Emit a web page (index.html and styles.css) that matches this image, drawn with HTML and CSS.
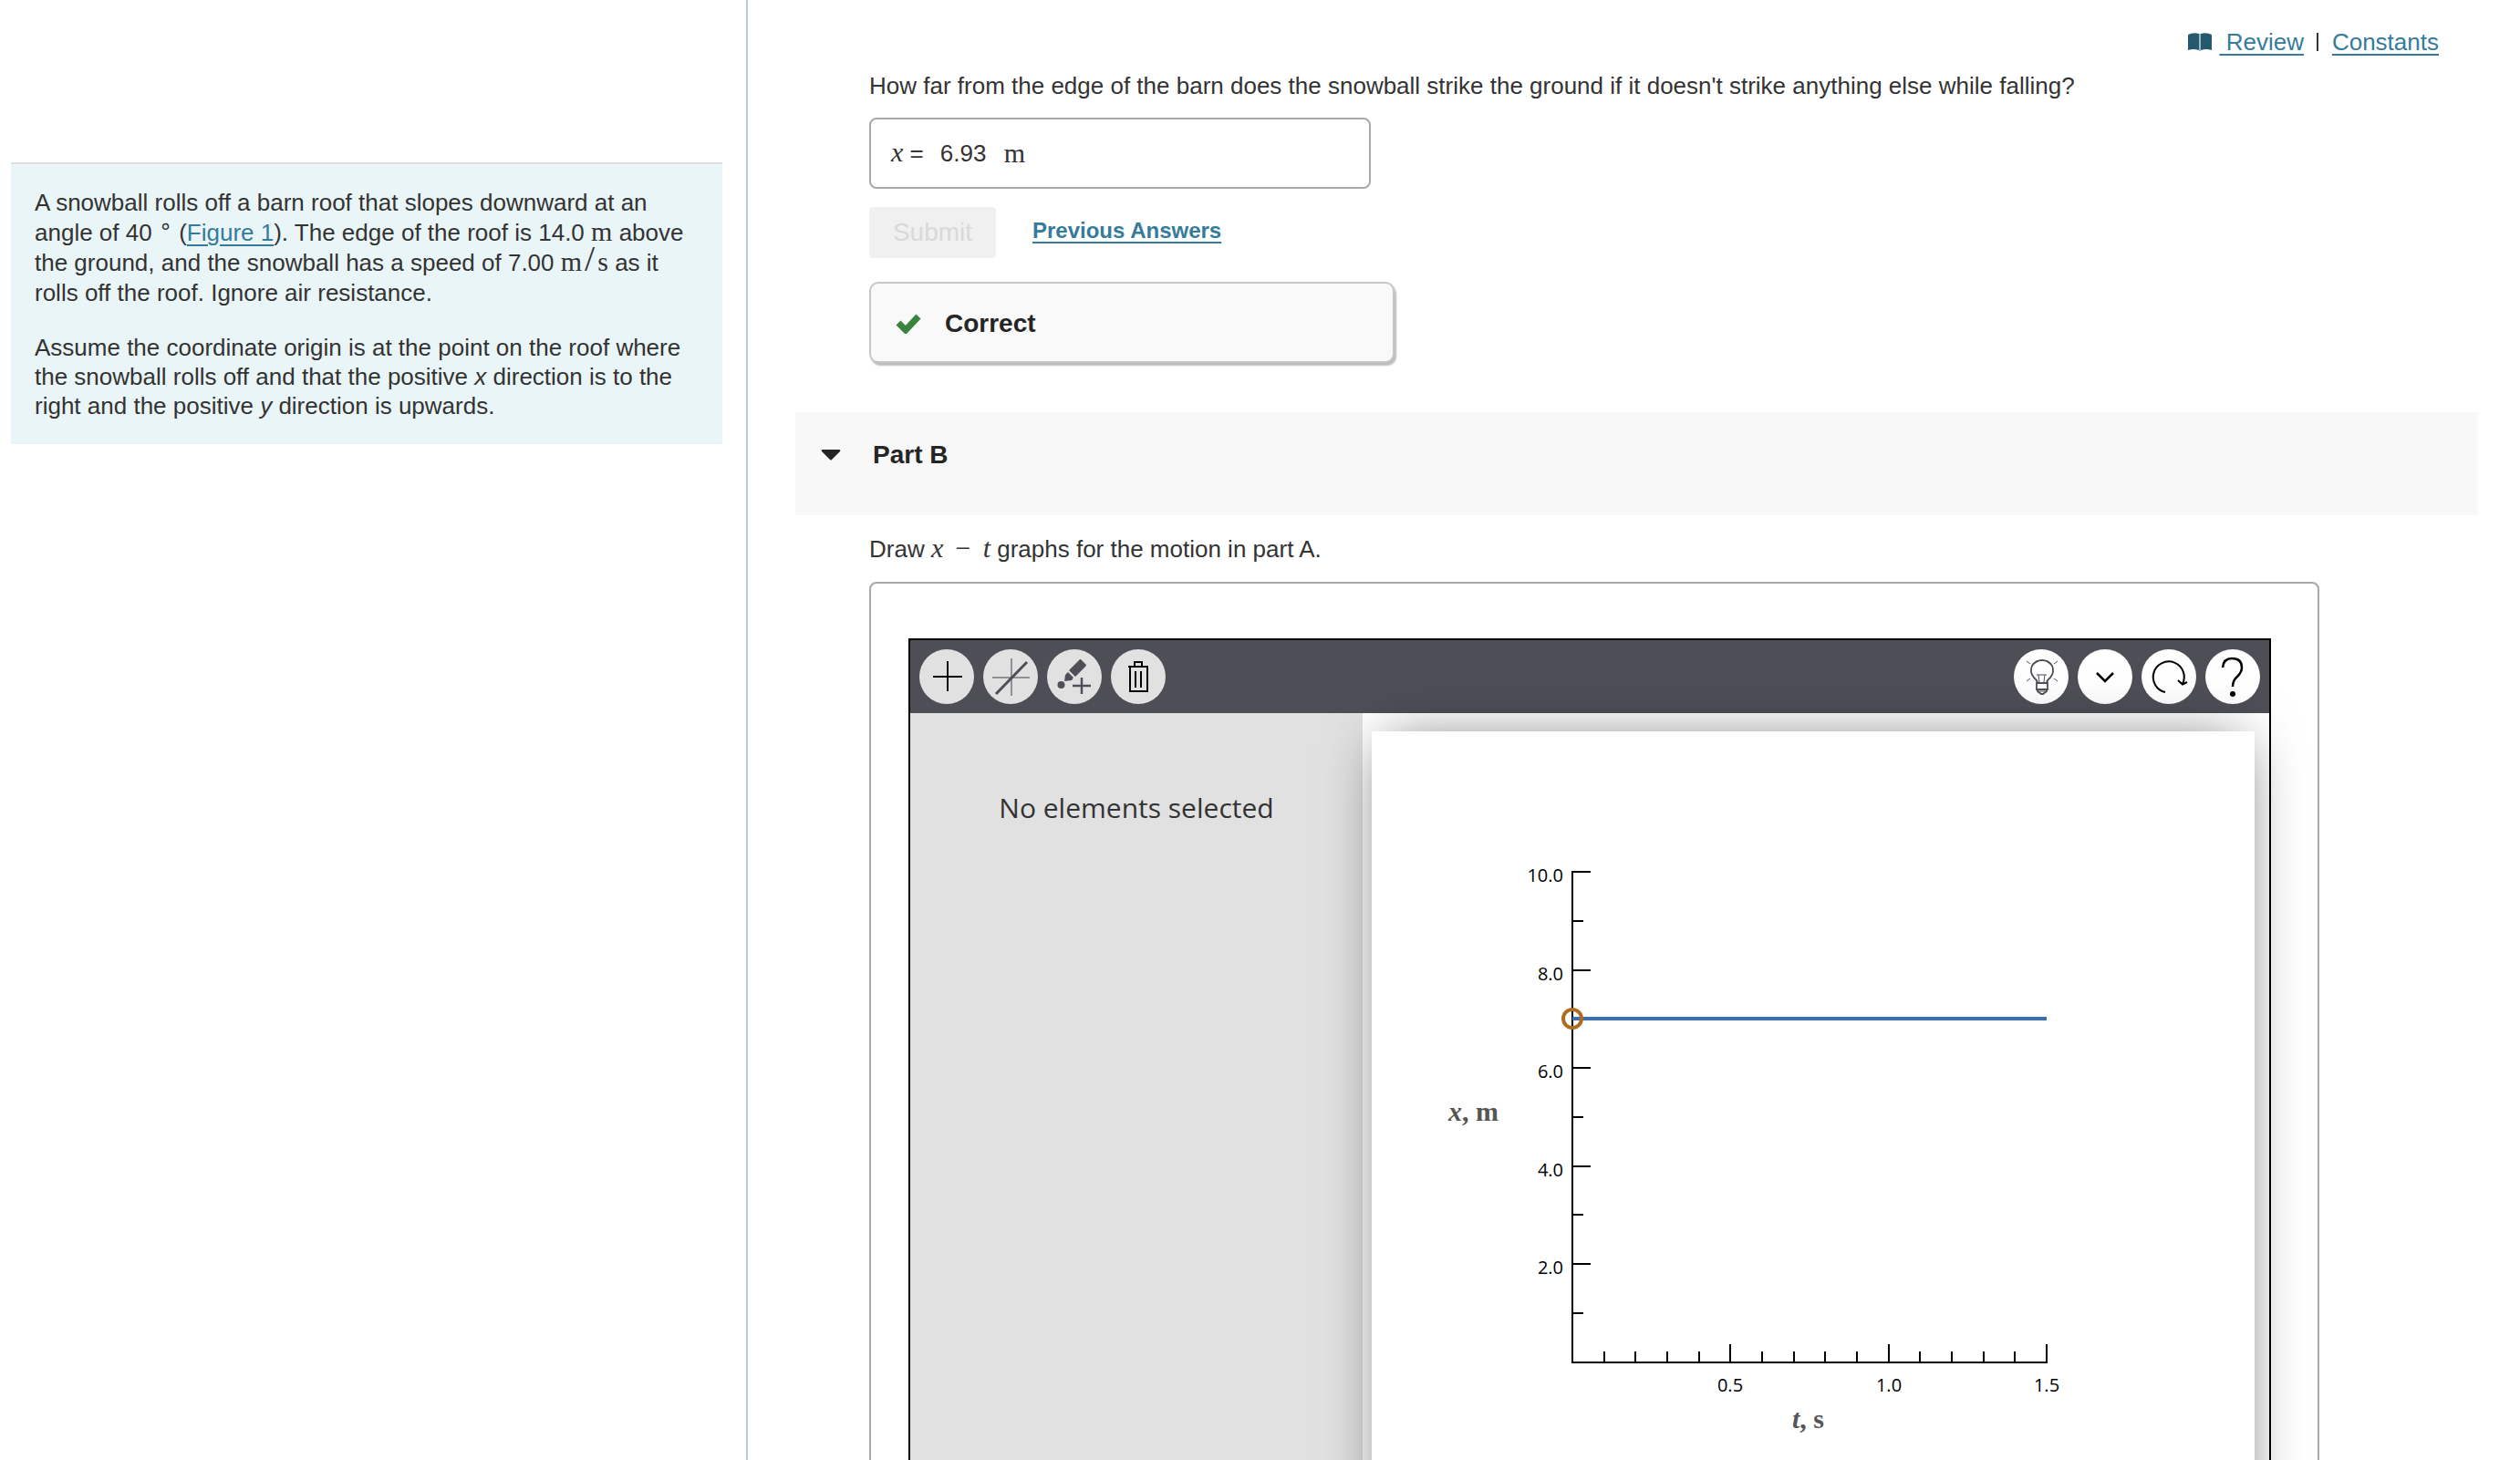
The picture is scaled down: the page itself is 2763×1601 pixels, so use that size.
FILE: index.html
```html
<!DOCTYPE html>
<html lang="en">
<head>
    <meta charset="UTF-8">
    <meta name="viewport" content="width=device-width, initial-scale=1.0">
    <title>Snowball problem</title>
    <link rel="stylesheet" href="styles.css">
</head>
<body>
    <div class="page">
        <aside class="intro-pane">
            <section class="intro">
                <p class="tall">A snowball rolls off a barn roof that slopes downward at an angle of 40 <span class="degree">∘</span> (<a href="#figure1">Figure 1</a>). The edge of the roof is 14.0 <span class="math">m</span> above the ground, and the snowball has a speed of 7.00 <span class="math">m<span class="slash">/</span>s</span> as it rolls off the roof. Ignore air resistance.</p>
                <p>Assume the coordinate origin is at the point on the roof where the snowball rolls off and that the positive <em>x</em> direction is to the right and the positive <em>y</em> direction is upwards.</p>
            </section>
        </aside>

        <main class="problem">
            <nav class="links">
                <svg class="book" viewBox="0 0 26 20" width="26" height="20" aria-hidden="true">
                    <path d="M0 2Q6-1 12 1V19Q6 17 0 19Z" fill="#24586e"/>
                    <path d="M14 1Q20-1 26 2V19Q20 17 14 19Z" fill="#24586e"/>
                    <path d="M12 1h2v19h-2z" fill="#9db7c2"/>
                </svg>
                <a href="#review">&nbsp;Review</a>
                <span class="divider"></span>
                <a href="#constants">Constants</a>
            </nav>

            <!-- Part A -->
            <div class="part">
                <p class="question">How far from the edge of the barn does the snowball strike the ground if it doesn't strike anything else while falling?</p>
                <div class="answer">
                    <label for="answerA"><i class="math">x</i> =</label>
                    <input id="answerA" type="text" value="6.93" readonly>
                    <span class="math">m</span>
                </div>
                <div class="actions">
                    <button type="button" class="submit" disabled>Submit</button>
                    <a href="#previous" class="previous">Previous Answers</a>
                </div>
                <div class="feedback">
                    <svg viewBox="0 0 28 22" width="28" height="22" aria-hidden="true">
                        <path d="M3 10L11 18L25 3" fill="none" stroke="#3a833f" stroke-width="7"/>
                    </svg>
                    <strong>Correct</strong>
                </div>
            </div>

            <!-- Part B -->
            <header class="part-header">
                <svg viewBox="0 0 22 12" width="22" height="12" aria-hidden="true">
                    <path d="M2 0H20Q22 0 21 2L12 11Q11 12 10 11L1 2Q0 0 2 0Z" fill="#252525"/>
                </svg>
                <h2>Part B</h2>
            </header>
            <div class="part">
                <p class="draw">Draw <i class="math">x</i> <span class="math minus">−</span> <i class="math">t</i> graphs for the motion in part A.</p>
                <div class="frame">
                    <div class="applet">
                        <div class="toolbar">
                            <button type="button" class="tool" aria-label="Add">
                                <svg viewBox="0 0 60 60"><path d="M31 13V46M15 30H47" stroke="#000" stroke-width="2"/></svg>
                            </button>
                            <button type="button" class="tool" aria-label="Line">
                                <svg viewBox="0 0 60 60" stroke="#4f4f57"><path d="M31 10V51M10 31H51" stroke="#77777d" stroke-width="1.500"/><path d="M14 49L48 14" stroke-width="3"/></svg>
                            </button>
                            <button type="button" class="tool" aria-label="Add point">
                                <svg viewBox="0 0 60 60" fill="#4f4f57"><path d="M37 11L43 17Q43 18 42 19L31 30L24 23L36 11ZM23 25L29 31L27 34L19 35L20 28Z"/><circle cx="15.500" cy="39" r="4"/><path d="M38 31V49M28 40H48" stroke="#4f4f57" stroke-width="2.500"/></svg>
                            </button>
                            <button type="button" class="tool" aria-label="Delete">
                                <svg viewBox="0 0 60 60" fill="none" stroke="#000" stroke-width="2"><path d="M19 19H41M21 19V46H40V19M26 19V14H34V19M27 24V42M33 24V42"/></svg>
                            </button>
                            <button type="button" class="tool light push" aria-label="Hint">
                                <svg viewBox="0 0 60 60" fill="none" stroke="#4f4f57" stroke-width="1.800"><path d="M26 37Q26 34 22 31Q17 25 20 18Q24 12 31 12Q38 12 42 18Q45 25 40 31Q36 34 36 37ZM25 37H37V44H25ZM26 44V46L30 49H32L36 46V44"/><path d="M25 28H36M27 28L28 36M34 28L33 36M26 46H36M14 13L18 16M48 13L44 16M14 35L18 32M48 35L44 32" stroke-width="1"/></svg>
                            </button>
                            <button type="button" class="tool light" aria-label="More">
                                <svg viewBox="0 0 60 60" fill="none" stroke="#000" stroke-width="2.500"><path d="M21 26L30 35L39 26"/></svg>
                            </button>
                            <button type="button" class="tool light" aria-label="Reset">
                                <svg viewBox="0 0 60 60" fill="none" stroke="#000" stroke-width="2"><path d="M26 47A17 17 0 1 1 45 38M40 34L45 38.500L50 36"/></svg>
                            </button>
                            <button type="button" class="tool light" aria-label="Help">
                                <svg viewBox="0 0 60 60" fill="none" stroke="#000" stroke-width="2.500"><path d="M19 20Q20 10 29 10Q40 10 40 20Q40 25 35 30Q30 34 30 41"/><circle cx="30" cy="49" r="3" fill="#000" stroke="none"/></svg>
                            </button>
                        </div>
                        <div class="workspace">
                            <div class="properties">No elements selected</div>
                            <div class="canvas">
                                <svg class="graph" viewBox="0 0 968 900" width="968" height="900" role="img" aria-label="x-t graph">
                                    <g class="ticks">
                                        <path d="M220 153V692M219 692H741"/>
                                        <path d="M220 154H240M220 208H232M220 262H240M220 315H232M220 369H240M220 423H232M220 477H240M220 530H232M220 584H240M220 638H232"/>
                                        <path d="M255 692V680M289 692V680M324 692V680M359 692V680M393 692V672M428 692V680M463 692V680M497 692V680M532 692V680M567 692V672M601 692V680M636 692V680M671 692V680M705 692V680M740 692V672"/>
                                    </g>
                                    <g class="labels y-labels">
                                        <text x="210" y="165">10.0</text>
                                        <text x="210" y="273">8.0</text>
                                        <text x="210" y="380">6.0</text>
                                        <text x="210" y="488">4.0</text>
                                        <text x="210" y="595">2.0</text>
                                    </g>
                                    <g class="labels x-labels">
                                        <text x="393" y="724">0.5</text>
                                        <text x="567" y="724">1.0</text>
                                        <text x="740" y="724">1.5</text>
                                    </g>
                                    <text class="axis-name" x="84" y="427"><tspan font-style="italic">x</tspan>, m</text>
                                    <text class="axis-name" x="461" y="764"><tspan font-style="italic">t</tspan>, s</text>
                                    <path d="M220 315H740" stroke="#3a6fb7" stroke-width="4"/>
                                    <circle cx="220" cy="315" r="10" fill="none" stroke="#b06b20" stroke-width="4"/>
                                </svg>
                            </div>
                        </div>
                    </div>
                </div>
            </div>
        </main>
    </div>
</body>
</html>
```

FILE: styles.css
```css
* {
    box-sizing: border-box;
}
body {
    margin: 0;
    background-color: #fff;
    color: #333;
    font-family: "Liberation Sans", Arial, sans-serif;
    font-size: 26px;
    line-height: 32px;
}
p, h2 {
    margin: 0;
}
a {
    color: #357b9c;
    text-decoration-thickness: 2px;
    text-underline-offset: 4px;
}
.page {
    display: grid;
    grid-template-columns: 820px 1fr;
    height: 100vh;
}

/* Left pane */
.intro-pane {
    padding: 178px 26px 0 12px;
    border-right: 2px solid #b8c9dc;
}
.intro {
    padding: 26px 24px 26px 26px;
    border-top: 2px solid #ddd;
    background-color: #eaf5f7;
}
.tall {
    margin-bottom: 27px;
    line-height: 33px;
}
.math {
    font-family: "Liberation Serif", "Times New Roman", serif;
    font-size: 30px;
    line-height: 0;
}
.slash {
    margin: 0 3px;
    font-size: 40px;
    line-height: 0;
}
.minus {
    margin: 0 6px;
}
.degree {
    font-family: "DejaVu Sans", sans-serif;
    font-size: 24px;
    line-height: 0;
    vertical-align: 8px;
}

/* Right pane */
.problem {
    overflow-x: hidden;
    overflow-y: auto;
    scrollbar-width: none;
    padding: 30px 46px 0 52px;
}
.links {
    display: flex;
    align-items: center;
    padding-right: 43px;
    justify-content: flex-end;
    height: 32px;
}
.book {
    margin-right: 8px;
}
.divider {
    width: 2px;
    height: 20px;
    margin: 0 15px 0 14px;
    background-color: #333;
}
.part {
    padding: 0 174px 0 81px;
}
.question {
    margin: 16px 0 19px;
}
.answer {
    display: flex;
    align-items: center;
    gap: 18px;
    width: 550px;
    height: 78px;
    padding: 0 22px;
    border: 2px solid #a9a9a9;
    border-radius: 8px;
}
.answer input {
    width: 52px;
    padding: 0;
    border: 0;
    color: #333;
    font: inherit;
}
.actions {
    display: flex;
    align-items: center;
    gap: 40px;
    margin: 20px 0 26px;
}
.submit {
    width: 139px;
    height: 56px;
    padding: 0;
    border: 0;
    border-radius: 4px;
    background-color: #f0f0f0;
    color: #d9d9d9;
    font: 28px "Liberation Sans", Arial, sans-serif;
}
.previous {
    margin-bottom: 4px;
    font-size: 24px;
    font-weight: bold;
}
.feedback {
    display: flex;
    align-items: center;
    gap: 26px;
    width: 576px;
    height: 89px;
    padding: 2px 27px 0;
    border: 2px solid #c6c6c6;
    border-radius: 10px;
    background-color: #f9f9f9;
    box-shadow: 2px 3px 2px #bbb;
    color: #252525;
    font-size: 28px;
}
.part-header {
    display: flex;
    align-items: center;
    gap: 35px;
    height: 113px;
    margin-top: 54px;
    padding: 0 28px 19px;
    background-color: #f8f8f8;
}
.part-header h2 {
    color: #252525;
    font-size: 28px;
}
.draw {
    padding: 21px 0 20px;
}
.frame {
    height: 1080px;
    padding: 60px 51px 0 41px;
    border: 2px solid #a9a9a9;
    border-radius: 8px;
}

/* Graph applet */
.applet {
    height: 1000px;
    border: 2px solid #000;
    font-family: "Open Sans", "Noto Sans", sans-serif;
}
.toolbar {
    display: flex;
    gap: 10px;
    padding: 10px;
    background-color: #4e4e57;
}
.tool {
    width: 60px;
    height: 60px;
    padding: 0;
    border: 0;
    border-radius: 50%;
    background-color: #e1e1e1;
}
.tool svg {
    display: block;
}
.light {
    background-color: #fff;
}
.push {
    margin-left: auto;
}
.workspace {
    display: grid;
    grid-template-columns: 496px 1fr;
}
.properties {
    height: 916px;
    padding-top: 88px;
    background-color: #e1e1e1;
    font-size: 30px;
    text-align: center;
}
.canvas {
    margin: 20px 16px 0 10px;
    background-color: #fff;
    box-shadow: 0 0 60px -16px rgba(0, 0, 0, 0.66);
}
.graph {
    display: block;
}
.ticks {
    fill: none;
    stroke: #000;
    stroke-width: 2px;
}
.labels {
    fill: #000;
    font-size: 20px;
}
.y-labels {
    text-anchor: end;
}
.x-labels {
    text-anchor: middle;
}
.axis-name {
    fill: #555;
    font-family: "Liberation Serif", "Times New Roman", serif;
    font-size: 30px;
    font-weight: bold;
}
```
